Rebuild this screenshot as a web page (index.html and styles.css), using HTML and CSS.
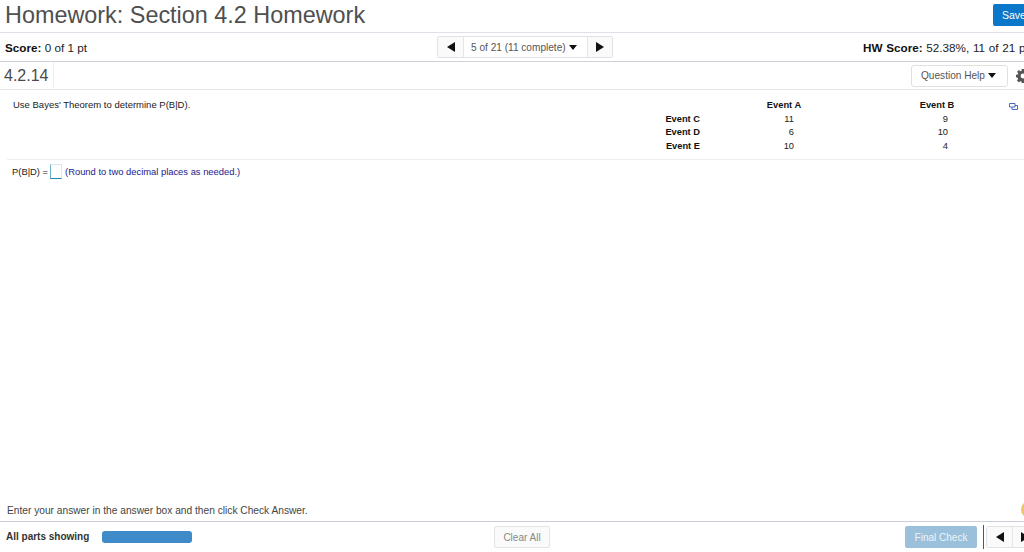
FILE: index.html
```html
<!DOCTYPE html>
<html lang="en">
<head>
<meta charset="utf-8">
<title>Homework: Section 4.2 Homework</title>
<link rel="stylesheet" href="styles.css">
</head>
<body>
<div class="page">
  <header class="title-bar">
    <h1 class="title">Homework: Section 4.2 Homework</h1>
    <button class="save">Save</button>
  </header>
  <div class="score-bar">
    <div class="score"><b>Score:</b> 0 of 1 pt</div>
    <div class="pager">
      <span class="pager-arrow"><i class="tri-left"></i></span>
      <span class="pager-label">5 of 21 (11 complete)<i class="tri-down"></i></span>
      <span class="pager-arrow"><i class="tri-right"></i></span>
    </div>
    <div class="hw-score"><b>HW Score:</b> 52.38%, 11 of 21 pts</div>
  </div>
  <div class="question-bar">
    <div class="qnum">4.2.14</div>
    <button class="help">Question Help<i class="tri-down"></i></button>
    <svg class="gear" viewBox="0 0 16 16" aria-hidden="true"><path fill="#555" fill-rule="evenodd" d="M6.600 0h2.800l.4 2.200 1.200.5 1.900-1.300 2 2-1.300 1.900.5 1.200 2.200.4v2.800l-2.200.4-.5 1.200 1.300 1.900-2 2-1.900-1.300-1.200.5-.4 2.200H6.600l-.4-2.200-1.200-.5-1.900 1.300-2-2 1.300-1.900-.5-1.200L-.1 9.400V6.600l2.200-.4.5-1.200-1.300-1.900 2-2L5 2.700l1.200-.5zM8 5.200a2.800 2.800 0 1 0 0 5.600 2.800 2.800 0 0 0 0-5.600z"/></svg>
  </div>
  <main class="content">
    <section class="prompt">
      <p class="prompt-text">Use Bayes' Theorem to determine P(B|D).</p>
      <div class="data">
        <span></span><b class="head">Event A</b><b class="head">Event B</b>
        <b class="label">Event C</b><span class="num-a">11</span><span class="num-b">9</span>
        <b class="label">Event D</b><span class="num-a">6</span><span class="num-b">10</span>
        <b class="label">Event E</b><span class="num-a">10</span><span class="num-b">4</span>
      </div>
      <svg class="popout" viewBox="0 0 9 7" aria-hidden="true"><path fill="none" stroke="#4a68c8" d="M.5.5h5.500v3.500H.5zM6 2.500h2.500v4H3V4"/></svg>
    </section>
    <div class="answer">
      <span>P(B|D) =</span><span class="box"></span><span class="hint">(Round to two decimal places as needed.)</span>
    </div>
  </main>
  <div class="instruction">Enter your answer in the answer box and then click Check Answer.<i class="help-dot"></i></div>
  <footer class="footer">
    <b class="parts">All parts showing</b>
    <span class="progress"></span>
    <button class="clear">Clear All</button>
    <button class="final">Final Check</button>
    <span class="divider"></span>
    <div class="pager foot-pager">
      <span class="pager-arrow"><i class="tri-left"></i></span>
      <span class="pager-arrow"><i class="tri-right"></i></span>
    </div>
  </footer>
</div>
</body>
</html>
```
FILE: styles.css
```css
* { box-sizing: border-box; }
html, body { margin: 0; padding: 0; overflow: hidden; background: #fff; }
body { width: 1024px; height: 552px; font-family: "Liberation Sans", Arial, sans-serif; color: #222; }
.page { width: 1024px; height: 552px; display: flex; flex-direction: column; overflow: hidden; }
button { font-family: inherit; margin: 0; }

.title-bar { height: 33px; flex: none; display: flex; align-items: flex-start; border-bottom: 1px solid #dfdfe8; padding-left: 5px; }
.title { margin: 0; font-size: 23.400px; line-height: 30px; font-weight: 400; color: #4f4f4f; flex: 1; }
.save { flex: none; width: 50px; height: 22px; margin: 4px -19px 0 0; padding: 0 0 0 9px; text-align: left; background: #0b77c9; color: #fff; border: 0; border-radius: 2px; font-size: 10.500px; }

.score-bar { height: 29px; flex: none; display: flex; align-items: center; border-bottom: 1px solid #cfcfd8; padding-left: 5px; font-size: 11.700px; color: #222; }
.score { width: 432px; flex: none; }
.score b, .hw-score b { color: #111; }
.pager { display: flex; height: 22px; border: 1px solid #e2e2e2; border-radius: 2px; background: #fff; flex: none; }
.pager-arrow { width: 25px; display: flex; align-items: center; justify-content: center; background: #fafafa; }
.pager-arrow + .pager-label, .pager-label + .pager-arrow, .pager-arrow + .pager-arrow { border-left: 1px solid #e6e6e6; }
.pager-label { width: 124px; display: flex; align-items: center; padding-left: 7px; font-size: 10.100px; color: #555; white-space: nowrap; }
.hw-score { margin-left: 250px; white-space: nowrap; flex: none; word-spacing: 0.500px; }

.tri-left, .tri-right, .tri-down { display: inline-block; width: 0; height: 0; flex: none; }
.tri-left { border-top: 5px solid transparent; border-bottom: 5px solid transparent; border-right: 8px solid #111; }
.tri-right { border-top: 5px solid transparent; border-bottom: 5px solid transparent; border-left: 8px solid #111; }
.tri-down { margin-left: 3px; border-left: 4.500px solid transparent; border-right: 4.500px solid transparent; border-top: 5px solid #111; }

.question-bar { height: 28px; flex: none; display: flex; align-items: center; border-bottom: 1px solid #e6e6ea; }
.qnum { width: 54px; height: 27px; padding-left: 4px; font-size: 16px; line-height: 27px; color: #4a4a4a; border-right: 1px solid #eee; flex: none; }
.help { margin-left: 857px; width: 97px; height: 22px; flex: none; display: flex; align-items: center; padding: 0 0 0 9px; background: #fff; border: 1px solid #e0e0e0; border-radius: 3px; font-size: 10.100px; color: #555; white-space: nowrap; }
.gear { width: 14px; height: 14px; margin-left: 8px; flex: none; }

.content { flex: 1; min-height: 0; }
.prompt { position: relative; height: 70px; margin-left: 7px; border-bottom: 1px solid #eee; display: flex; }
.prompt-text { margin: 9px 0 0 6px; font-size: 9.500px; line-height: 12px; color: #222; width: 617px; flex: none; }
.data { display: grid; grid-template-columns: 70px 168px 138px; grid-auto-rows: 13.700px; margin-top: 9px; font-size: 9.300px; line-height: 12px; color: #222; }
.head { text-align: center; white-space: nowrap; color: #111; }
.label { text-align: right; color: #111; white-space: nowrap; }
.num-a { text-align: right; padding-right: 74px; }
.num-b { text-align: right; padding-right: 58px; }
.popout { position: absolute; left: 1002px; top: 13px; width: 9px; height: 7px; }
.answer { margin-left: 12px; height: 23px; display: flex; align-items: center; font-size: 9.400px; color: #222; }
.box { width: 12px; height: 15px; margin: 0 3px 0 2px; border: 1px solid #d9e8ee; border-bottom: 1px solid #1b87ad; border-left-color: #6db3cc; flex: none; }
.hint { color: #1a1a8c; }

.instruction { flex: none; height: 22px; padding: 0 0 0 7px; font-size: 10.200px; line-height: 23px; color: #444; position: relative; }
.help-dot { position: absolute; left: 1021px; top: 2px; width: 17px; height: 17px; border-radius: 50%; background: #f0c36a; }
.footer { height: 31px; flex: none; display: flex; align-items: center; border-top: 1px solid #c9ced9; padding-left: 6px; }
.parts { width: 96px; flex: none; font-size: 10px; color: #333; margin-bottom: 2px; }
.progress { width: 90px; height: 12px; flex: none; border-radius: 3px; background: #3f8bc9; }
.clear { margin-left: 302px; width: 56px; height: 22px; flex: none; padding: 0; background: #fafafa; border: 1px solid #e4e4e4; border-radius: 2px; font-size: 10px; color: #888; }
.final { margin-left: 355px; width: 72px; height: 22px; flex: none; padding: 0; background: #9ac0dc; border: 0; border-radius: 2px; font-size: 10px; color: #eef4f8; }
.divider { width: 1px; height: 24px; margin-left: 6px; background: #555; flex: none; }
.foot-pager { margin-left: 2px; }
```
